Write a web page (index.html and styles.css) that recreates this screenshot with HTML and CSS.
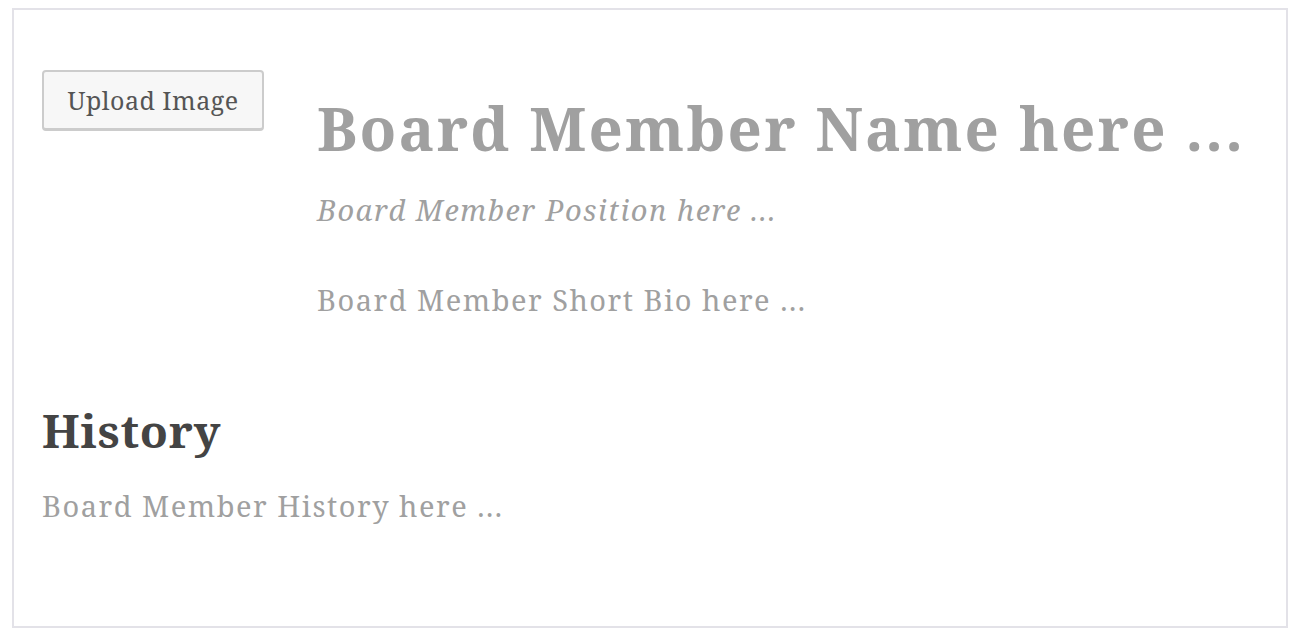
FILE: index.html
```html
<!DOCTYPE html>
<html lang="en">
<head>
    <meta charset="UTF-8">
    <meta name="viewport" content="width=device-width, initial-scale=1.0">
    <title>Board Member</title>
    <link rel="stylesheet" href="styles.css">
</head>
<body>
    <div class="member-card">
        <div class="member-top">
            <div class="member-photo">
                <button class="upload-button" type="button">Upload Image</button>
            </div>
            <div class="member-info">
                <h1 class="member-name">Board Member Name here ...</h1>
                <p class="member-position">Board Member Position here ...</p>
                <p class="member-bio">Board Member Short Bio here ...</p>
            </div>
        </div>
        <div class="member-history">
            <h2>History</h2>
            <p>Board Member History here ...</p>
        </div>
    </div>
</body>
</html>
```
FILE: styles.css
```css
body {
    margin: 8px 10px 0 12px;
    background: #fff;
    font-family: "Noto Serif", "DejaVu Serif", serif;
}
.member-card {
    height: 620px;
    box-sizing: border-box;
    border: 2px solid #e3e2e8;
    padding: 60px 28px 0 28px;
}
.member-top {
    display: flex;
}
.member-photo {
    width: 275px;
    flex-shrink: 0;
}
.upload-button {
    width: 222px;
    height: 61px;
    padding: 0;
    background: #f7f7f7;
    border: 2px solid #cccccc;
    border-bottom-width: 3px;
    border-radius: 4px;
    color: #555;
    font-family: inherit;
    font-size: 25px;
    letter-spacing: 0.5px;
}
.member-info {
    color: #a0a0a0;
}
.member-name {
    margin: 18px 0 0;
    font-size: 60px;
    line-height: 80px;
    font-weight: bold;
    letter-spacing: 2.2px;
}
.member-position {
    margin: 22px 0 0;
    font-size: 29px;
    font-style: italic;
    line-height: 40px;
    letter-spacing: 1.5px;
}
.member-bio {
    margin: 50px 0 0;
    font-size: 29px;
    line-height: 40px;
    letter-spacing: 1.5px;
}
.member-history h2 {
    margin: 80px 0 0;
    color: #444;
    font-size: 46px;
    line-height: 60px;
    letter-spacing: 0.8px;
}
.member-history p {
    margin: 26px 0 0;
    color: #a0a0a0;
    font-size: 29px;
    line-height: 40px;
    letter-spacing: 1.5px;
}
```
